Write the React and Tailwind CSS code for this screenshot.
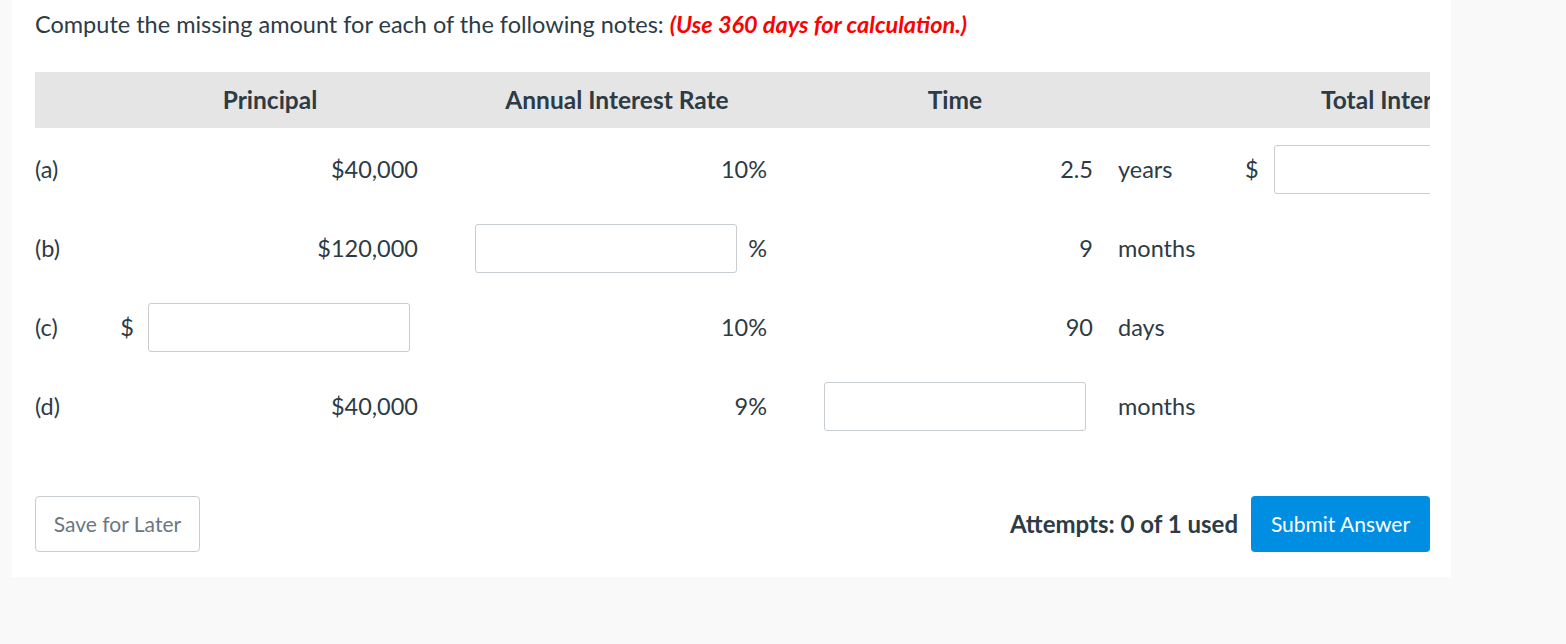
import React from "react";

const rows = [
  { label: "(a)", principal: "$40,000", rate: "10%", time: "2.5", unit: "years", total: "input" },
  { label: "(b)", principal: "$120,000", rate: "input", time: "9", unit: "months", total: null },
  { label: "(c)", principal: "input", rate: "10%", time: "90", unit: "days", total: null },
  { label: "(d)", principal: "$40,000", rate: "9%", time: "input", unit: "months", total: null },
];

const Field = () => (
  <input
    type="text"
    className="w-[262px] h-[49px] shrink-0 border border-[#c7cdd1] rounded-[3px] bg-white outline-none"
  />
);

export default function App() {
  return (
    <div
      className="h-[644px] bg-[#f9f9f9] text-[#2d3b45]"
      style={{ fontFamily: "Lato, 'Open Sans', sans-serif" }}
    >
      <div className="ml-[12px] w-[1439px] bg-white pl-[23px] pr-[21px] pt-[9px] pb-[25px]">
        <p className="text-[23.5px] leading-[30px] whitespace-nowrap">
          Compute the missing amount for each of the following notes:{" "}
          <span className="font-bold italic text-[#ff0000]">(Use 360 days for calculation.)</span>
        </p>

        <div className="mt-[33px] w-[1395px] overflow-hidden">
          <div className="w-[1600px]">
            <div className="flex h-[56px] items-center bg-[#e5e5e5] text-[24.5px] font-bold">
              <div className="w-[87px] shrink-0" />
              <div className="w-[296px] shrink-0 text-center">Principal</div>
              <div className="w-[49px] shrink-0" />
              <div className="w-[300px] shrink-0 text-center whitespace-nowrap">Annual Interest Rate</div>
              <div className="w-[50px] shrink-0" />
              <div className="w-[276px] shrink-0 text-center">Time</div>
              <div className="w-[25px] shrink-0" />
              <div className="w-[127px] shrink-0" />
              <div className="w-[289px] shrink-0 pl-[76px] whitespace-nowrap">Total Interest</div>
            </div>

            <div className="mt-[2px] text-[23.5px]">
              {rows.map((r) => (
                <div key={r.label} className="flex h-[79px] items-center">
                  <div className="w-[87px] shrink-0">{r.label}</div>
                  <div className="w-[296px] shrink-0 flex items-center justify-end">
                    {r.principal === "input" ? (
                      <div className="flex items-center gap-[14px] pr-[8px]">
                        <span>$</span>
                        <Field />
                      </div>
                    ) : (
                      <span>{r.principal}</span>
                    )}
                  </div>
                  <div className="w-[49px] shrink-0" />
                  <div className="w-[300px] shrink-0 flex items-center justify-end">
                    {r.rate === "input" ? (
                      <div className="flex items-center gap-[11px]">
                        <Field />
                        <span>%</span>
                      </div>
                    ) : (
                      <span>{r.rate}</span>
                    )}
                  </div>
                  <div className="w-[50px] shrink-0" />
                  <div className="w-[276px] shrink-0 flex items-center justify-end">
                    {r.time === "input" ? (
                      <div className="pr-[7px] flex">
                        <Field />
                      </div>
                    ) : (
                      <span>{r.time}</span>
                    )}
                  </div>
                  <div className="w-[25px] shrink-0" />
                  <div className="w-[127px] shrink-0">{r.unit}</div>
                  <div className="w-[289px] shrink-0 flex items-center">
                    {r.total === "input" && (
                      <div className="flex items-center gap-[15px]">
                        <span>$</span>
                        <Field />
                      </div>
                    )}
                  </div>
                </div>
              ))}
            </div>
          </div>
        </div>

        <div className="mt-[50px] flex items-center justify-between">
          <button
            type="button"
            className="w-[165px] h-[56px] border border-[#c7cdd1] rounded-[4px] bg-white text-[21px] text-[#6b7780]"
          >
            Save for Later
          </button>
          <div className="flex items-center">
            <span className="mr-[13px] text-[24px] font-bold">Attempts: 0 of 1 used</span>
            <button
              type="button"
              className="w-[179px] h-[56px] rounded-[4px] bg-[#008ee2] text-[21px] text-white"
            >
              Submit Answer
            </button>
          </div>
        </div>
      </div>
    </div>
  );
}
